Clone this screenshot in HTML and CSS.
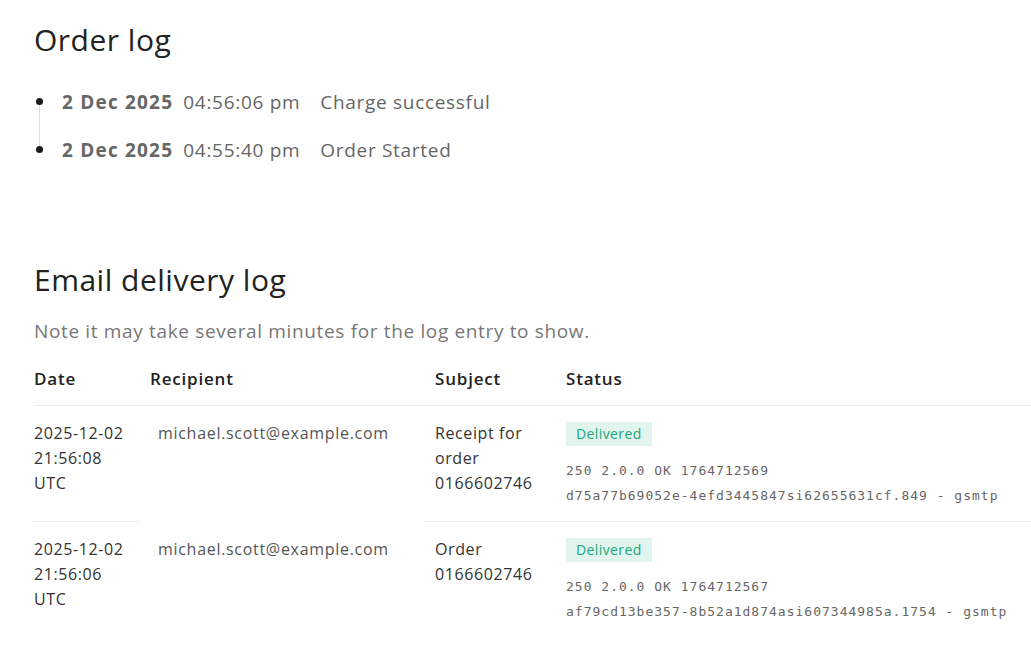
FILE: index.html
```html
<!DOCTYPE html>
<html lang="en">
<head>
<meta charset="utf-8">
<title>Order log</title>
<link rel="stylesheet" href="styles.css">
</head>
<body>
<section class="section">
  <h1 class="title">Order log</h1>
  <ul class="timeline">
    <li class="event">
      <span class="dot"></span>
      <span class="ev-date">2 Dec 2025</span>
      <span class="ev-time">04:56:06 pm</span>
      <span class="ev-text">Charge successful</span>
    </li>
    <li class="event">
      <span class="dot"></span>
      <span class="ev-date">2 Dec 2025</span>
      <span class="ev-time">04:55:40 pm</span>
      <span class="ev-text">Order Started</span>
    </li>
  </ul>
</section>

<section class="section">
  <h2 class="title title-email">Email delivery log</h2>
  <p class="note">Note it may take several minutes for the log entry to show.</p>
  <table class="log">
    <colgroup>
      <col class="c-date"><col class="c-rec"><col class="c-sub"><col class="c-status">
    </colgroup>
    <thead>
      <tr>
        <th class="first">Date</th>
        <th>Recipient</th>
        <th>Subject</th>
        <th>Status</th>
      </tr>
    </thead>
    <tbody>
      <tr>
        <td class="first bordered">2025-12-02 21:56:08 UTC</td>
        <td class="rec"><span class="email">michael.scott@example.com</span></td>
        <td class="bordered">Receipt for order 0166602746</td>
        <td class="bordered">
          <span class="badge">Delivered</span>
          <div class="smtp">250 2.0.0 OK 1764712569<br>d75a77b69052e-4efd3445847si62655631cf.849 - gsmtp</div>
        </td>
      </tr>
      <tr>
        <td class="first">2025-12-02 21:56:06 UTC</td>
        <td class="rec"><span class="email">michael.scott@example.com</span></td>
        <td>Order 0166602746</td>
        <td>
          <span class="badge">Delivered</span>
          <div class="smtp">250 2.0.0 OK 1764712567<br>af79cd13be357-8b52a1d874asi607344985a.1754 - gsmtp</div>
        </td>
      </tr>
    </tbody>
  </table>
</section>
</body>
</html>
```
FILE: styles.css
```css
html, body {
  margin: 0;
  padding: 0;
  background: #fff;
}
body {
  padding-left: 34px;
  font-family: "Open Sans", "Noto Sans", sans-serif;
  color: #333;
  overflow: hidden;
}
.title {
  margin: 20px 0 0;
  font-size: 30px;
  line-height: 40px;
  font-weight: 400;
  color: #222;
  letter-spacing: 0.5px;
}
.title-email {
  margin-top: 86px;
}
.timeline {
  list-style: none;
  margin: 18px 0 0;
  padding: 0;
}
.event {
  position: relative;
  display: flex;
  align-items: center;
  height: 48px;
  padding-left: 28px;
  font-size: 19px;
  color: #666;
  letter-spacing: 0.7px;
}
.event:first-child::after {
  content: "";
  position: absolute;
  left: 5px;
  top: 24px;
  height: 48px;
  width: 1px;
  background: #dedede;
}
.dot {
  position: absolute;
  left: 2px;
  top: 20px;
  width: 7px;
  height: 7px;
  border-radius: 50%;
  background: #1a1a1a;
  z-index: 1;
}
.ev-date {
  font-weight: 700;
  margin-right: 10px;
  letter-spacing: 1.2px;
}
.ev-time {
  margin-right: 20px;
}
.note {
  margin: 18px 0 14px;
  font-size: 19px;
  line-height: 26px;
  color: #777;
  letter-spacing: 0.65px;
}
.log {
  width: 997px;
  table-layout: fixed;
  border-collapse: collapse;
  border-spacing: 0;
}
.c-date { width: 106px; }
.c-rec { width: 285px; }
.c-sub { width: 131px; }
.c-status { width: 475px; }
.log th {
  text-align: left;
  font-size: 17px;
  font-weight: 600;
  line-height: 25px;
  color: #222;
  padding: 8px 10px 14px;
  border-bottom: 1px solid #ececec;
  letter-spacing: 0.8px;
}
.log td {
  vertical-align: top;
  font-size: 16px;
  line-height: 25px;
  color: #333;
  padding: 15px 10px 13px;
  letter-spacing: 0.6px;
}
.log .first {
  padding-left: 0;
}
.log td.bordered {
  border-bottom: 1px solid #ececec;
}
.email {
  display: block;
  padding-left: 8px;
  color: #555;
  letter-spacing: 0.7px;
}
.badge {
  display: inline-block;
  height: 24px;
  line-height: 24px;
  padding: 0 10px;
  background: #e1f5ee;
  color: #21a67a;
  font-size: 14px;
  letter-spacing: 0.4px;
}
.smtp {
  margin-top: 12px;
  font-family: "DejaVu Sans Mono", monospace;
  font-size: 13px;
  line-height: 25px;
  letter-spacing: 1px;
  color: #666;
  white-space: nowrap;
}
```
